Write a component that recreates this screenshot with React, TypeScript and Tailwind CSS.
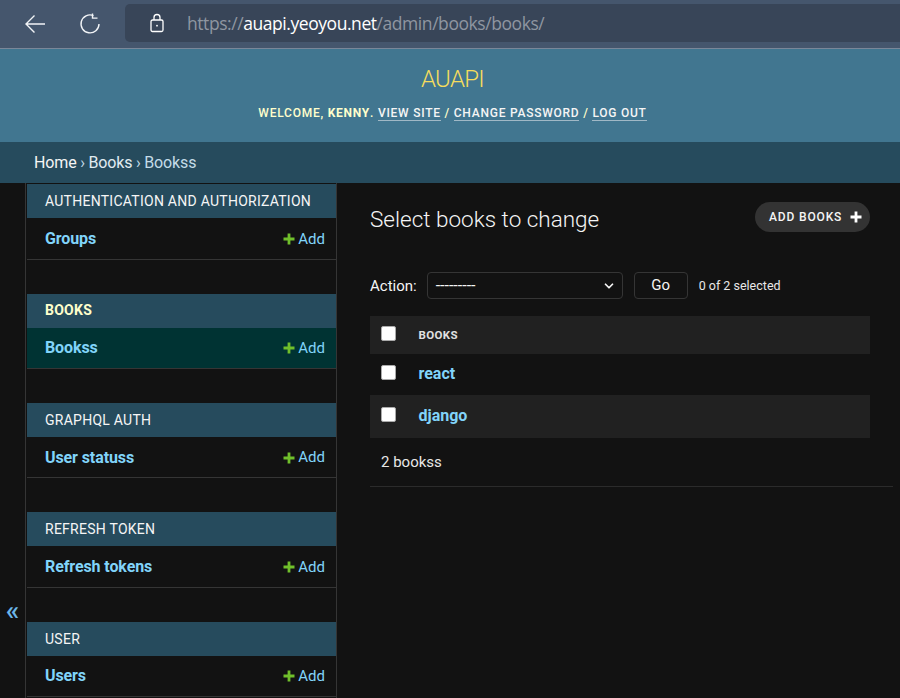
import { ChevronDown } from "lucide-react";

const MODULES = [
  { title: "AUTHENTICATION AND AUTHORIZATION", model: "Groups" },
  { title: "BOOKS", model: "Bookss", active: true },
  { title: "GRAPHQL AUTH", model: "User statuss" },
  { title: "REFRESH TOKEN", model: "Refresh tokens" },
  { title: "USER", model: "Users" },
];

function PlusIcon({ className }: { className: string }) {
  return (
    <svg viewBox="0 0 12 12" className={className} fill="currentColor">
      <path d="M4.6 0.5h2.8v4.1h4.1v2.8H7.4v4.1H4.6V7.4H0.5V4.6h4.1z" />
    </svg>
  );
}

function BrowserBar() {
  return (
    <div className="h-[49px] shrink-0 bg-[#45566d] border-b border-[#7a8799] flex items-center pl-[24px]">
      <svg viewBox="0 0 22 20" className="w-[22px] h-[20px] text-[#f2f4f7]" fill="none" stroke="currentColor" strokeWidth="1.4">
        <path d="M21 10H2M10.5 1.5 2 10l8.5 8.5" />
      </svg>
      <svg viewBox="0 0 22 22" className="w-[22px] h-[22px] ml-[33px] text-[#f2f4f7]" fill="none" stroke="currentColor" strokeWidth="1.4">
        <path d="M14.5 2.6A9 9 0 1 0 20 11" />
        <path d="M13.5 0.5v4.6h5" />
      </svg>
      <div className="ml-[24px] h-[38px] w-[775px] -mt-[3px] rounded-l-[5px] bg-[#384558] flex items-center pl-[25px]">
        <svg viewBox="0 0 14 20" className="w-[14px] h-[20px] text-white" fill="none" stroke="currentColor" strokeWidth="1.3">
          <rect x="1" y="7" width="12" height="11.5" rx="1.5" />
          <path d="M4 7V4.5a3 3 0 0 1 6 0V7" />
          <circle cx="7" cy="12.7" r="0.9" fill="currentColor" stroke="none" />
        </svg>
        <div className="ml-[23px] mt-[1px] text-[17.5px] tracking-[-0.44px] text-[#8f96a1] font-['Open_Sans',sans-serif]">
          https://<span className="text-white">auapi.yeoyou.net</span>/admin/books/books/
        </div>
      </div>
    </div>
  );
}

function Header() {
  return (
    <div className="h-[93px] shrink-0 bg-[#417690] flex flex-col items-center pt-[17px] pl-[5px]">
      <div className="text-[24px] leading-[26px] font-light text-[#f5dd5d] tracking-[-0.7px]">AUAPI</div>
      <div className="mt-[12px] text-[12px] leading-[18px] font-medium tracking-[0.76px] text-[#ffc]">
        WELCOME, <strong className="font-bold">KENNY</strong>.{" "}
        <span className="text-[#f5f5f5] border-b border-[#a0b8c6]">VIEW SITE</span> /{" "}
        <span className="text-[#f5f5f5] border-b border-[#a0b8c6]">CHANGE PASSWORD</span> /{" "}
        <span className="text-[#f5f5f5] border-b border-[#a0b8c6]">LOG OUT</span>
      </div>
    </div>
  );
}

function Sidebar() {
  return (
    <div className="flex shrink-0">
      <div className="w-[26px] border-r border-[#353535] flex items-end justify-center">
        <div className="text-[#6bb6ea] text-[28px] leading-[28px] font-medium mb-[73px]">«</div>
      </div>
      <div className="w-[311px] border-r border-[#353535] pl-[1px] pt-[1.2px]">
        {MODULES.map((m) => (
          <div key={m.title} className="mb-[34px]">
            <div className={`h-[34px] bg-[#264b5d] pl-[18px] pt-[0.6px] flex items-center text-[14px] tracking-[0.26px] ${m.active ? "font-bold text-[#ffc]" : "text-[#f5f5f5]"}`}>
              {m.title}
            </div>
            <div className={`h-[41.4px] border-b border-[#353535] pl-[18px] pr-[11px] pt-[1px] flex items-center justify-between ${m.active ? "bg-[#003333]" : ""}`}>
              <span className="text-[16px] font-bold text-[#81d4fa] -tracking-[0.1px]">{m.model}</span>
              <span className="flex items-center text-[#81d4fa] text-[15px]">
                <PlusIcon className="w-[12px] h-[12px] text-[#70bf2b] mr-[3px]" />
                Add
              </span>
            </div>
          </div>
        ))}
      </div>
    </div>
  );
}

function Row({ band, height, label }: { band?: boolean; height: string; label: string }) {
  return (
    <div className={`${height} flex items-center pl-[11px] ${band ? "bg-[#212121]" : ""}`}>
      <input type="checkbox" className="w-[15px] h-[15px] -mt-[4px] appearance-none bg-white rounded-[2px] border border-[#aaa]" />
      <span className="ml-[22.5px] -mt-[2px] text-[16px] font-bold text-[#81d4fa]">{label}</span>
    </div>
  );
}

function Content() {
  return (
    <div className="flex-1 pl-[33px] pr-[7px] pt-[18px] min-w-0">
      <div className="flex items-start justify-between pr-[23px]">
        <h1 className="text-[22.5px] leading-[36px] font-light text-[#f5f5f5]">Select books to change</h1>
        <div className="mt-[1px] h-[30px] w-[115px] rounded-full bg-[#333] flex items-center pl-[14px] text-[12px] font-medium tracking-[0.85px] text-[#f5f5f5]">
          ADD BOOKS
          <PlusIcon className="w-[12px] h-[12px] ml-[8px] text-white" />
        </div>
      </div>

      <div className="mt-[35px] flex items-center h-[28px] pr-[23px]">
        <span className="text-[15px] text-[#f5f5f5]">Action:</span>
        <div className="ml-[10px] -mt-[1px] w-[196px] h-[27px] rounded-[4px] border border-[#353535] flex items-center justify-between pl-[8px] pr-[6px] text-[#f5f5f5]">
          <span className="text-[16px] leading-none">---------</span>
          <ChevronDown size={14} strokeWidth={3} />
        </div>
        <div className="ml-[11px] -mt-[1px] w-[54px] h-[27px] rounded-[4px] border border-[#353535] flex items-center justify-center text-[15px] text-[#f5f5f5]">Go</div>
        <span className="ml-[11px] text-[12.5px] text-[#e8e8e8]">0 of 2 selected</span>
      </div>

      <div className="mt-[16px] mr-[23px]">
        <div className="h-[38px] bg-[#212121] flex items-center pl-[11px]">
          <input type="checkbox" className="w-[15px] h-[15px] -mt-[3px] appearance-none bg-white rounded-[2px] border border-[#aaa]" />
          <span className="ml-[22.5px] mt-[1px] text-[11.5px] font-bold tracking-[0.35px] text-[#e0e0e0]">BOOKS</span>
        </div>
        <Row height="h-[41px]" label="react" />
        <Row band height="h-[43px]" label="django" />
      </div>

      <div className="h-[49px] border-b border-[#2b2b2b] pl-[11px] flex items-center text-[15px] text-[#e8e8e8]">2 bookss</div>
    </div>
  );
}

export default function App() {
  return (
    <div className="h-[698px] w-[900px] overflow-hidden flex flex-col bg-[#121212] font-['Roboto',sans-serif]">
      <BrowserBar />
      <Header />
      <div className="h-[41px] shrink-0 bg-[#264b5d] pl-[34px] flex items-center text-[16px] tracking-[-0.1px] text-[#c4dce8]">
        <span className="text-[#f5f5f5]">Home</span>
        <span className="mx-[3.5px]">›</span>
        <span className="text-[#e0ecf2]">Books</span>
        <span className="mx-[3.5px]">›</span>
        Bookss
      </div>
      <div className="flex flex-1 min-h-0">
        <Sidebar />
        <Content />
      </div>
    </div>
  );
}
